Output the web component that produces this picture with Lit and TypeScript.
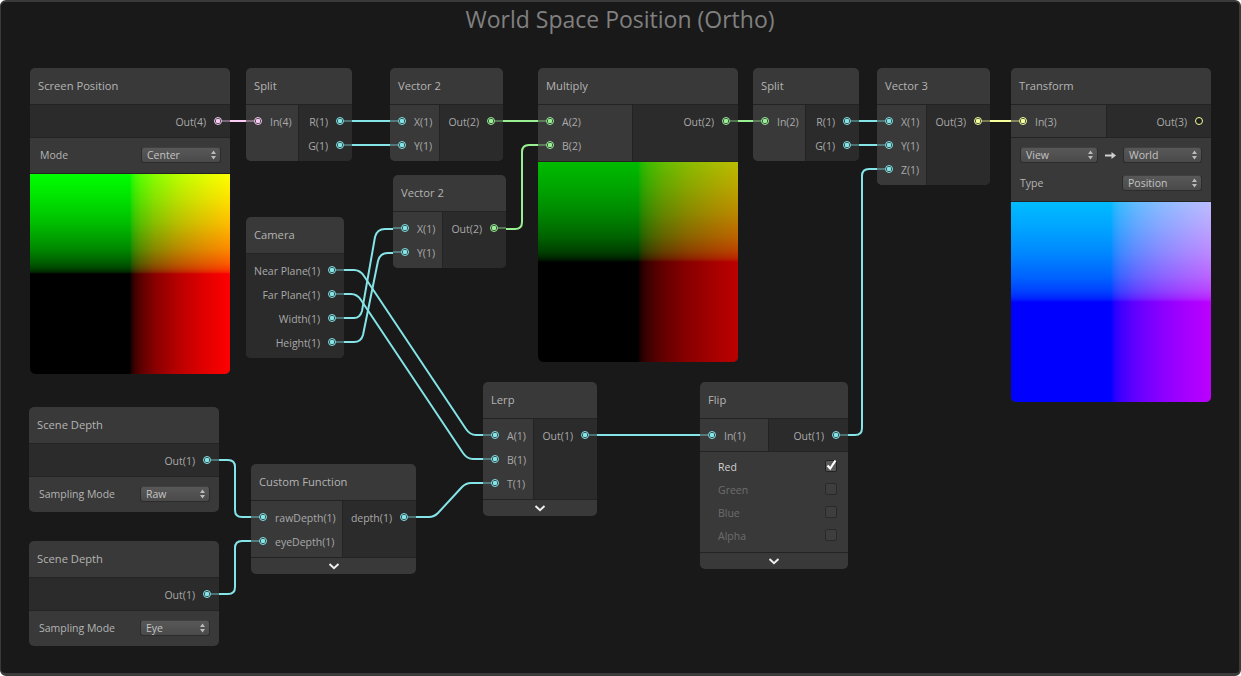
import { LitElement, css, html, nothing, svg } from "lit";
import { customElement } from "lit/decorators.js";
import { classMap } from "lit/directives/class-map.js";

type PortType = 1 | 2 | 3 | 4;
interface Port {
  label: string;
  t: PortType;
  open?: boolean;
}
interface NodeDef {
  title: string;
  x: number;
  y: number;
  w: number;
  inW?: number;
  inputs?: Port[];
  outputs: Port[];
  select?: { label: string; value: string; w: number };
  transform?: boolean;
  channels?: boolean;
  footer?: boolean;
  preview?: "pos" | "mul" | "view";
}

const p = (label: string, t: PortType, open = false): Port => ({ label, t, open });

const NODES: NodeDef[] = [
  { title: "Screen Position", x: 30, y: 68, w: 200, outputs: [p("Out(4)", 4)], select: { label: "Mode", value: "Center", w: 80 }, preview: "pos" },
  { title: "Split", x: 246, y: 68, w: 106, inW: 53, inputs: [p("In(4)", 4)], outputs: [p("R(1)", 1), p("G(1)", 1)] },
  { title: "Vector 2", x: 390, y: 68, w: 113, inW: 50, inputs: [p("X(1)", 1), p("Y(1)", 1)], outputs: [p("Out(2)", 2)] },
  { title: "Multiply", x: 538, y: 68, w: 200, inW: 95, inputs: [p("A(2)", 2), p("B(2)", 2)], outputs: [p("Out(2)", 2)], preview: "mul" },
  { title: "Split", x: 753, y: 68, w: 106, inW: 53, inputs: [p("In(2)", 2)], outputs: [p("R(1)", 1), p("G(1)", 1)] },
  { title: "Vector 3", x: 877, y: 68, w: 113, inW: 50, inputs: [p("X(1)", 1), p("Y(1)", 1), p("Z(1)", 1)], outputs: [p("Out(3)", 3)] },
  { title: "Transform", x: 1011, y: 68, w: 200, inW: 96, inputs: [p("In(3)", 3)], outputs: [p("Out(3)", 3, true)], transform: true, preview: "view" },
  { title: "Vector 2", x: 393, y: 175, w: 113, inW: 50, inputs: [p("X(1)", 1), p("Y(1)", 1)], outputs: [p("Out(2)", 2)] },
  { title: "Camera", x: 246, y: 217, w: 98, outputs: [p("Near Plane(1)", 1), p("Far Plane(1)", 1), p("Width(1)", 1), p("Height(1)", 1)] },
  { title: "Scene Depth", x: 29, y: 407, w: 190, outputs: [p("Out(1)", 1)], select: { label: "Sampling Mode", value: "Raw", w: 70 } },
  { title: "Scene Depth", x: 29, y: 541, w: 190, outputs: [p("Out(1)", 1)], select: { label: "Sampling Mode", value: "Eye", w: 70 } },
  { title: "Custom Function", x: 251, y: 464, w: 165, inW: 92, inputs: [p("rawDepth(1)", 1), p("eyeDepth(1)", 1)], outputs: [p("depth(1)", 1)], footer: true },
  { title: "Lerp", x: 483, y: 382, w: 114, inW: 51, inputs: [p("A(1)", 1), p("B(1)", 1), p("T(1)", 1)], outputs: [p("Out(1)", 1)], footer: true },
  { title: "Flip", x: 700, y: 382, w: 148, inW: 69, inputs: [p("In(1)", 1)], outputs: [p("Out(1)", 1)], channels: true, footer: true },
];

const WIRES: { t: PortType; d: string }[] = [
  { t: 4, d: "M230 121H246" },
  { t: 1, d: "M352 121H390" },
  { t: 1, d: "M352 145H390" },
  { t: 2, d: "M503 121H538" },
  { t: 2, d: "M506 229H515Q522 229 522 222V152Q522 145 529 145H538" },
  { t: 2, d: "M738 121H753" },
  { t: 1, d: "M859 121H877" },
  { t: 1, d: "M859 145H877" },
  { t: 3, d: "M990 121H1011" },
  { t: 1, d: "M597 435H700" },
  { t: 1, d: "M848 435H855Q862 435 862 428V176Q862 169 869 169H877" },
  { t: 1, d: "M344 270H354Q360 270 364 276L466 429Q470 435 476 435H483" },
  { t: 1, d: "M344 294H351Q357 294 361 300L463 453Q467 459 473 459H483" },
  { t: 1, d: "M344 318H354Q360 318 362 311L375 237Q377 229 385 229H393" },
  { t: 1, d: "M344 342H354Q361 342 363 335L378 261Q380 253 388 253H393" },
  { t: 1, d: "M219 460H228Q235 460 235 467V510Q235 517 242 517H251" },
  { t: 1, d: "M219 594H228Q235 594 235 587V548Q235 541 242 541H251" },
  { t: 1, d: "M416 517H429Q434 517 438 513L462 487Q466 483 471 483H483" },
];

const WIRE_COLORS: Record<PortType, string> = { 1: "#84e4e7", 2: "#9aef92", 3: "#f6ff9a", 4: "#fbcbf4" };

const CHANNELS = [
  { label: "Red", on: true },
  { label: "Green", on: false },
  { label: "Blue", on: false },
  { label: "Alpha", on: false },
];

@customElement("app-root")
export class AppRoot extends LitElement {
  private renderPort(port: Port, side: "in" | "out") {
    const marker = html`<span class=${classMap({ port: true, open: !!port.open, [side]: true, [`t${port.t}`]: true })}></span>`;
    return side === "in"
      ? html`<div class="row in">${marker}<span class="plabel">${port.label}</span></div>`
      : html`<div class="row out"><span class="plabel">${port.label}</span>${marker}</div>`;
  }

  private renderSelect(value: string, width: number) {
    return html`<div class="select" style="width:${width}px">
      <span>${value}</span>
      <svg width="5" height="10" viewBox="0 0 5 10"><path d="M2.5 0.5 5 4H0ZM2.5 9.5 0 6H5Z" fill="#bbb" /></svg>
    </div>`;
  }

  private renderNode(n: NodeDef) {
    return html`<div class="node" style="left:${n.x}px;top:${n.y}px;width:${n.w}px">
      <div class="head">${n.title}</div>
      <div class="ports">
        ${n.inputs
          ? html`<div class="col inputs" style="width:${n.inW}px">${n.inputs.map((i) => this.renderPort(i, "in"))}</div>`
          : nothing}
        <div class="col outputs">${n.outputs.map((o) => this.renderPort(o, "out"))}</div>
      </div>
      ${n.select
        ? html`<div class="controls">
            <div class="ctl"><span class="clabel">${n.select.label}</span>${this.renderSelect(n.select.value, n.select.w)}</div>
          </div>`
        : nothing}
      ${n.transform
        ? html`<div class="controls stack">
            <div class="ctl">
              ${this.renderSelect("View", 78)}
              <svg class="arrow" width="11" height="9" viewBox="0 0 11 9"><path d="M0 3.5H6.5V1L11 4.5 6.5 8V5.5H0Z" fill="#d0d0d0" /></svg>
              ${this.renderSelect("World", 79)}
            </div>
            <div class="ctl"><span class="clabel">Type</span>${this.renderSelect("Position", 80)}</div>
          </div>`
        : nothing}
      ${n.channels
        ? html`<div class="channels">
            ${CHANNELS.map(
              (c) => html`<div class=${classMap({ chan: true, on: c.on })}>
                <span>${c.label}</span>
                <span class="check">
                  ${c.on
                    ? html`<svg width="13" height="13" viewBox="0 0 13 13"><path d="M2.5 6.5 5.2 9.5 10.5 1.5" fill="none" stroke="#fff" stroke-width="2.2" /></svg>`
                    : nothing}
                </span>
              </div>`
            )}
          </div>`
        : nothing}
      ${n.preview ? html`<div class="preview ${n.preview}"></div>` : nothing}
      ${n.footer
        ? html`<div class="foot">
            <svg width="12" height="7" viewBox="0 0 12 7"><path d="M1.5 1 6 5.2 10.5 1" fill="none" stroke="#eee" stroke-width="2" /></svg>
          </div>`
        : nothing}
    </div>`;
  }

  render() {
    return html`
      <div class="canvas">
        <h1 class="title">World Space Position (Ortho)</h1>
        <svg class="wires" width="1241" height="676" viewBox="0 0 1241 676">
          ${WIRES.map((w) => svg`<path d=${w.d} fill="none" stroke=${WIRE_COLORS[w.t]} stroke-width="2" />`)}
        </svg>
        ${NODES.map((n) => this.renderNode(n))}
      </div>
    `;
  }

  static styles = css`
    :host {
      display: block;
      width: 1241px;
      height: 676px;
      font-family: "Open Sans", "Noto Sans", sans-serif;
      --line: #232323;
    }

    * {
      box-sizing: border-box;
    }

    .canvas {
      position: relative;
      width: 1241px;
      height: 676px;
      overflow: hidden;
      background: #191919;
      border: solid #3a3a3a;
      border-width: 2px 2px 3px 1px;
      border-radius: 6px;
    }

    .title {
      margin: 0;
      text-align: center;
      font-size: 23px;
      line-height: 34px;
      font-weight: 400;
      color: #808080;
    }

    .wires {
      position: absolute;
      left: -1px;
      top: -2px;
      z-index: 1;
      pointer-events: none;
    }

    .node {
      position: absolute;
      margin: -2px 0 0 -1px;
      overflow: hidden;
      border-radius: 5px;
      background: #393939;
      font-size: 10.5px;
      color: #a9a9a9;
    }

    .head {
      height: 37px;
      padding-left: 8px;
      line-height: 36px;
      font-size: 11.2px;
      color: #b4b4b4;
      border-bottom: 1px solid var(--line);
    }

    .ports {
      display: flex;
    }

    .col {
      padding: 4px 0;
    }

    .inputs {
      flex: none;
      background: #393939;
      border-right: 1px solid var(--line);
    }

    .outputs {
      flex: 1;
      background: #2b2b2b;
    }

    .row {
      display: flex;
      align-items: center;
      height: 24px;
    }

    .row.out {
      justify-content: flex-end;
      padding-right: 8px;
    }

    .row.in {
      padding-left: 8px;
    }

    .plabel {
      position: relative;
      top: 1px;
      white-space: nowrap;
    }

    .row.out .plabel {
      margin-right: 8px;
    }

    .row.in .plabel {
      margin-left: 8px;
    }

    .port {
      position: relative;
      flex: none;
      width: 8px;
      height: 8px;
      border: 1px solid var(--c);
      border-radius: 50%;
      background: radial-gradient(circle, var(--c) 0 2px, #2b3a3a 2.5px);
    }

    .port.open {
      background: #1f1f1f;
    }

    .port.open::after {
      display: none;
    }

    .port::after {
      content: "";
      position: absolute;
      top: 2px;
      width: 8px;
      height: 2px;
      background: var(--c);
      opacity: 0.38;
    }

    .port.in::after {
      right: 7px;
    }

    .port.out::after {
      left: 7px;
    }

    .t1 {
      --c: #84e4e7;
    }

    .t2 {
      --c: #9aef92;
    }

    .t3 {
      --c: #f6ff9a;
    }

    .t4 {
      --c: #fbcbf4;
    }

    .controls {
      border-top: 1px solid var(--line);
      height: 36px;
      padding: 9px 9px 0 10px;
    }

    .controls.stack {
      height: 64px;
      padding: 9px 9px 0;
      display: flex;
      flex-direction: column;
      gap: 12px;
    }

    .ctl {
      display: flex;
      align-items: center;
      justify-content: space-between;
      height: 16px;
    }

    .clabel {
      color: #b4b4b4;
    }

    .select {
      display: flex;
      align-items: center;
      justify-content: space-between;
      height: 16px;
      padding: 0 4px 0 5px;
      border: 1px solid #2c2c2c;
      border-top-color: #3f3f3f;
      border-radius: 3px;
      background: linear-gradient(#585858, #4a4a4a);
      font-size: 10.5px;
      color: #c4c4c4;
    }

    .channels {
      height: 101px;
      padding: 3px 0 5px;
      border-top: 1px solid var(--line);
    }

    .chan {
      display: flex;
      align-items: center;
      justify-content: space-between;
      height: 23px;
      padding: 0 11px 0 18px;
      color: #6d6d6d;
    }

    .chan.on {
      color: #d0d0d0;
    }

    .check {
      position: relative;
      width: 12px;
      height: 12px;
      margin-top: -2px;
      border: 1px solid #2a2a2a;
      border-radius: 2px;
      background: #3e3e3e;
    }

    .chan.on .check {
      background: #5a5a5a;
      border-color: #222;
    }

    .check svg {
      position: absolute;
      left: -1px;
      top: -2px;
    }

    .foot {
      display: flex;
      align-items: center;
      justify-content: center;
      height: 17px;
      border-top: 1px solid var(--line);
    }

    .preview {
      height: 201px;
      border-top: 1px solid var(--line);
      background-clip: padding-box;
      background-color: #000;
      background-blend-mode: screen;
    }

    /* gradients follow a linear ramp shown in sRGB, hence the uneven stops */
    .pos {
      background-image:
        linear-gradient(to right, #000 50%, #270000 51%, #3f0000 52.5%, #590000 55%, #890000 62.5%, #bc0000 75%, #e10000 87.5%, #f00 100%),
        linear-gradient(to top, #000 50%, #002700 51%, #003f00 52.5%, #005900 55%, #008900 62.5%, #00bc00 75%, #00e100 87.5%, #0f0 100%);
    }

    .mul {
      background-image:
        linear-gradient(to right, #000 50%, #190000 51%, #2b0000 52.5%, #3f0000 55%, #630000 62.5%, #890000 75%, #a50000 87.5%, #bc0000 100%),
        linear-gradient(to top, #000 50%, #001900 51%, #002b00 52.5%, #003f00 55%, #006300 62.5%, #008900 75%, #00a500 87.5%, #00bc00 100%);
    }

    .view {
      background-color: #00f;
      background-image:
        linear-gradient(to right, #000 50%, #190000 51%, #2b0000 52.5%, #3f0000 55%, #630000 62.5%, #890000 75%, #a50000 87.5%, #bc0000 100%),
        linear-gradient(to top, #000 50%, #001900 51%, #002b00 52.5%, #003f00 55%, #006300 62.5%, #008900 75%, #00a500 87.5%, #00bc00 100%);
    }
  `;
}

declare global {
  interface HTMLElementTagNameMap {
    "app-root": AppRoot;
  }
}
